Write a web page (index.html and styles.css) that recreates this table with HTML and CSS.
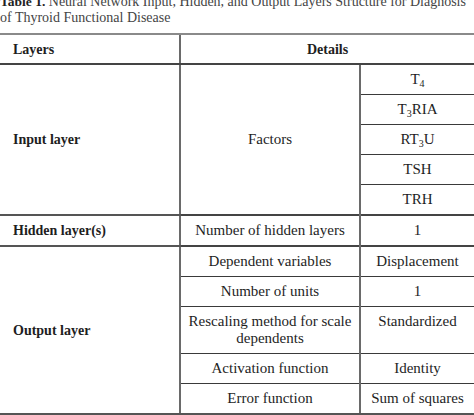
FILE: index.html
```html
<!DOCTYPE html>
<html>
<head>
<meta charset="utf-8">
<link rel="stylesheet" href="styles.css">
</head>
<body>
<div class="page">
  <p class="caption"><b>Table 1.</b> Neural Network Input, Hidden, and Output Layers Structure for Diagnosis<br>of Thyroid Functional Disease</p>
  <table class="grid">
    <colgroup>
      <col class="c1"><col class="c2"><col class="c3">
    </colgroup>
    <thead>
      <tr>
        <th class="layer">Layers</th>
        <th colspan="2" class="details">Details</th>
      </tr>
    </thead>
    <tbody>
      <tr class="group">
        <td rowspan="5" class="layer">Input layer</td>
        <td rowspan="5" class="mid">Factors</td>
        <td class="val">T<sub>4</sub></td>
      </tr>
      <tr><td class="val">T<sub>3</sub>RIA</td></tr>
      <tr><td class="val">RT<sub>3</sub>U</td></tr>
      <tr><td class="val">TSH</td></tr>
      <tr><td class="val">TRH</td></tr>
      <tr class="group">
        <td class="layer">Hidden layer(s)</td>
        <td class="mid">Number of hidden layers</td>
        <td class="val">1</td>
      </tr>
      <tr class="group">
        <td rowspan="6" class="layer">Output layer</td>
        <td class="mid">Dependent variables</td>
        <td class="val">Displacement</td>
      </tr>
      <tr><td class="mid">Number of units</td><td class="val">1</td></tr>
      <tr><td class="mid">Rescaling method for scale dependents</td><td class="val top">Standardized</td></tr>
      <tr><td class="mid">Activation function</td><td class="val">Identity</td></tr>
      <tr class="last"><td class="mid">Error function</td><td class="val">Sum of squares</td></tr>
    </tbody>
  </table>
</div>
</body>
</html>
```
FILE: styles.css
```css
html, body {
  margin: 0;
  padding: 0;
  background: #fff;
}
.page {
  width: 474px;
  margin-top: -6px;
  font-family: "Liberation Serif", "Times New Roman", serif;
  color: #1e1e1e;
}
.caption {
  margin: 0;
  font-size: 14px;
  line-height: 16px;
  color: #444;
  white-space: nowrap;
}
.caption b {
  color: #222;
  font-size: 13.5px;
}
.grid {
  margin-top: 7px;
  width: 474px;
  border-collapse: collapse;
  table-layout: fixed;
  font-size: 15px;
  line-height: 17px;
}
.c1 { width: 180px; }
.c2 { width: 180px; }
.c3 { width: 114px; }
.grid th, .grid td {
  padding: 6px 6px;
  height: 17px;
  border-top: 1px solid #3a3a3a;
  border-left: 2px solid #6a6a6a;
  vertical-align: middle;
}
.grid thead th {
  border-top: 2px solid #8a8a8a;
  border-bottom: 2px solid #444;
  padding: 6px 6px 5px;
  font-size: 14px;
}
.grid th:first-child, .grid td.layer {
  border-left: none;
}
.layer {
  text-align: left;
  font-weight: bold;
  font-size: 14px;
  padding-left: 13px !important;
}
.details {
  text-align: center;
  font-weight: bold;
}
.mid, .val {
  text-align: center;
}
.val.top {
  vertical-align: top;
}
.grid tr.group > td {
  border-top: 2px solid #444;
}
.grid tr.last > td {
  border-bottom: 2px solid #555;
}
.grid td.layer {
  border-bottom: 2px solid #555;
}
sub {
  font-size: 10px;
  line-height: 0;
  vertical-align: -3px;
}
```
